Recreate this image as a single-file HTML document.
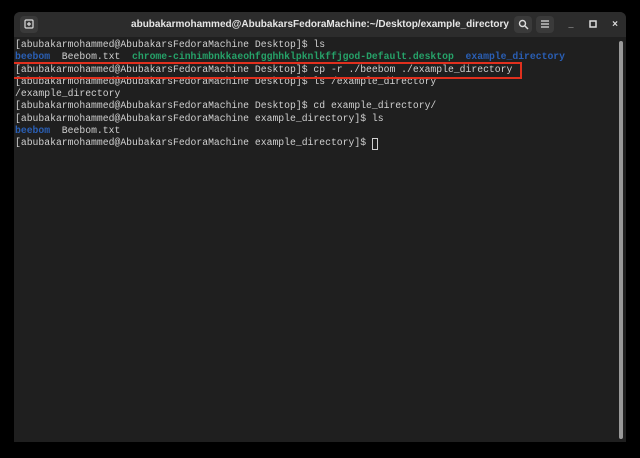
<!DOCTYPE html>
<html><head><style>
body{margin:0;width:640px;height:458px;background:#000;overflow:hidden;position:relative;font-family:"Liberation Sans",sans-serif}
.win{position:absolute;left:14px;top:12px;width:612px;height:430px;background:#1f1f1f;border-radius:6px 6px 0 0;overflow:hidden}
.tb{position:absolute;left:0;top:0;width:612px;height:25px;background:#2c2c2c;color:#e6e6e6;font-size:10px;font-weight:bold}
.title{position:absolute;left:0;right:0;top:7px;text-align:center}
.term{position:absolute;left:1px;top:27px;font-family:"Liberation Mono",monospace;font-size:9.75px;line-height:12.25px;color:#d0d0d0;white-space:pre}
.b{color:#2a5fb5;font-weight:bold}.g{color:#26a269;font-weight:bold}
.box{position:absolute;left:-2px;top:50px;width:506px;height:13px;border:2px solid #e0301e}
.sb{position:absolute;right:3px;top:29px;width:4px;height:398px;background:#9a9a9a;border-radius:2px}
.ic{position:absolute;top:4px;width:18px;height:17px;border-radius:4px;color:#ddd;font-size:11px;text-align:center;line-height:17px}
</style></head><body>
<div class="win">
<div class="tb">
<div class="ic" style="left:6px;background:#3a3a3a"><svg width="10" height="10" viewBox="0 0 10 10" style="margin-top:3px"><rect x="1" y="1" width="8" height="8" rx="1" fill="none" stroke="#ddd" stroke-width="1.2"/><path d="M5 3v4M3 5h4" stroke="#ddd" stroke-width="1.2"/></svg></div>
<div class="title">abubakarmohammed@AbubakarsFedoraMachine:~/Desktop/example_directory</div>
<div class="ic" style="left:500px;background:#3a3a3a"><svg width="11" height="11" viewBox="0 0 11 11" style="margin-top:3px"><circle cx="4.5" cy="4.5" r="3" fill="none" stroke="#ddd" stroke-width="1.4"/><path d="M7 7l3 3" stroke="#ddd" stroke-width="1.5"/></svg></div>
<div class="ic" style="left:522px;background:#3a3a3a"><svg width="10" height="10" viewBox="0 0 10 10" style="margin-top:3px"><path d="M1 2h8M1 5h8M1 8h8" stroke="#ddd" stroke-width="1.3"/></svg></div>
<div class="ic" style="left:548px;font-size:9px">_</div>
<div class="ic" style="left:570px"><svg width="8" height="8" viewBox="0 0 8 8" style="margin-top:4px"><rect x="1" y="1" width="6" height="6" fill="none" stroke="#ddd" stroke-width="1.5"/></svg></div>
<div class="ic" style="left:592px;font-size:10px">×</div>
</div>
<div class="term">[abubakarmohammed@AbubakarsFedoraMachine Desktop]$ ls
<span class="b">beebom</span>  Beebom.txt  <span class="g">chrome-cinhimbnkkaeohfgghhklpknlkffjgod-Default.desktop</span>  <span class="b">example_directory</span>
[abubakarmohammed@AbubakarsFedoraMachine Desktop]$ cp -r ./beebom ./example_directory
[abubakarmohammed@AbubakarsFedoraMachine Desktop]$ ls /example_directory
/example_directory
[abubakarmohammed@AbubakarsFedoraMachine Desktop]$ cd example_directory/
[abubakarmohammed@AbubakarsFedoraMachine example_directory]$ ls
<span class="b">beebom</span>  Beebom.txt
[abubakarmohammed@AbubakarsFedoraMachine example_directory]$ <span style="display:inline-block;width:6px;border:1px solid #d0d0d0;vertical-align:-2px;line-height:0;box-sizing:border-box;height:12px;margin-bottom:-3px"></span></div>
<div class="box"></div>
<div class="sb"></div>
</div>
</body></html>
